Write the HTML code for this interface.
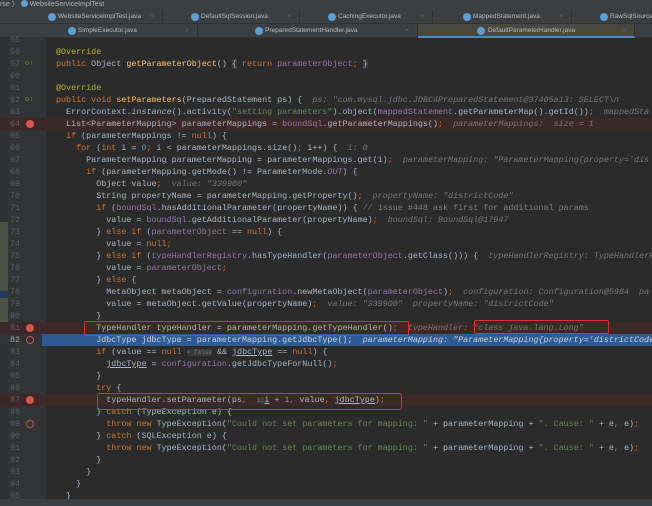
<!DOCTYPE html>
<html><head><meta charset="utf-8"><style>
*{margin:0;padding:0;box-sizing:border-box}
body{width:652px;height:506px;overflow:hidden;background:#2b2b2b;font-family:"Liberation Mono",monospace;position:relative}
.bc{position:absolute;left:0;top:0;width:652px;height:10px;background:#3c3f41;font:7px "Liberation Sans",sans-serif;color:#a9b7c6;line-height:10px;white-space:pre}
.tr{position:absolute;left:0;width:652px;height:14px;background:#3c3f41;border-bottom:1px solid #323232}
.tab{position:absolute;top:0;height:14px;border-right:1px solid #2f2f2f;font:6.5px "Liberation Sans",sans-serif;color:#bbbbbb;line-height:14px;white-space:pre}
.tab i{position:absolute;top:3px;width:8px;height:8px;border-radius:50%;background:#5c9fd1}
.tab b{position:absolute;right:8px;top:0;color:#666;font-weight:normal}
.gut{position:absolute;left:8px;top:38px;width:38px;height:462px;background:#313335}
.left{position:absolute;left:0;top:38px;width:8px;height:462px;background:#2f3133}
.ln{position:absolute;left:0;height:12px;width:652px;font-size:8.4px;line-height:12px;white-space:pre;color:#a9b7c6}
.ln .n{position:absolute;left:0;width:20px;text-align:right;color:#606366}
.ln .c{position:absolute;left:56px}
.red{background:#3d2828}
.blue{background:#2f5a92}
.k{color:#cc7832}.a{color:#bbb529}.m{color:#ffc66d}.f{color:#9876aa}.s{color:#6a8759}.d{color:#6897bb}.h{color:#787878;font-style:italic}.cm{color:#808080}.u{text-decoration:underline}
.bp{position:absolute;left:26px;top:2px;width:8px;height:8px;border-radius:50%;background:#d9534f}
.bo{position:absolute;left:26px;top:2px;width:8px;height:8px;border-radius:50%;border:1.2px solid #c75450}
.og{position:absolute;left:25px;color:#6a9955;font-size:7px}
.box{position:absolute;border:1.5px solid #e0302c;border-radius:2px}
.bot{position:absolute;left:0;top:499px;width:652px;height:7px;background:#3c3f41}
.g{position:absolute;top:0;width:1px;background:#373737}
</style></head><body>
<div class="bc">rse 〉 <span style="display:inline-block;width:7px;height:7px;border-radius:50%;background:#5c9fd1;vertical-align:-1px"></span> WebsiteServiceImplTest</div>
<div class="tr" style="top:10px">
<div class="tab" style="left:10px;width:153px"><i style="left:38px"></i><span style="position:absolute;left:48px">WebsiteServiceImplTest.java</span><b>×</b></div>
<div class="tab" style="left:163px;width:137px"><i style="left:28px"></i><span style="position:absolute;left:38px">DefaultSqlSession.java</span><b>×</b></div>
<div class="tab" style="left:300px;width:133px"><i style="left:28px"></i><span style="position:absolute;left:38px">CachingExecutor.java</span><b>×</b></div>
<div class="tab" style="left:433px;width:139px"><i style="left:30px"></i><span style="position:absolute;left:40px">MappedStatement.java</span><b>×</b></div>
<div class="tab" style="left:572px;width:80px"><i style="left:28px"></i><span style="position:absolute;left:38px">RawSqlSource</span></div>
</div>
<div class="tr" style="top:24px">
<div class="tab" style="left:10px;width:188px"><i style="left:58px"></i><span style="position:absolute;left:68px">SimpleExecutor.java</span><b>×</b></div>
<div class="tab" style="left:198px;width:220px"><i style="left:57px"></i><span style="position:absolute;left:67px">PreparedStatementHandler.java</span><b>×</b></div>
<div class="tab" style="left:418px;width:217px;background:#4a4940;border-bottom:2px solid #4a88c7"><i style="left:59px"></i><span style="position:absolute;left:70px">DefaultParameterHandler.java</span><b>×</b></div>
</div>
<div class="left"></div>
<div style="position:absolute;left:0;top:222px;width:8px;height:110px;background:#4b5347"></div>
<div style="position:absolute;left:0;top:291px;width:8px;height:7px;background:#1f3c5a"></div>
<div class="gut"></div>
<div class="g" style="left:44px;top:38px;height:462px"></div>

<div class="ln" style="top:34px"><span class="n">55</span></div>
<div class="ln" style="top:46px"><span class="n">56</span><span class="c a">@Override</span></div>
<div class="ln" style="top:58px"><span class="n">57</span><span class="og">o↑</span><span class="c"><span class="k">public</span> Object <span class="m">getParameterObject</span>() <span style="background:#3b3b3b">{</span> <span class="k">return</span> <span class="f">parameterObject</span><span class="k">;</span> <span style="background:#3b3b3b">}</span></span></div>
<div class="ln" style="top:70px"><span class="n">60</span></div>
<div class="ln" style="top:82px"><span class="n">61</span><span class="c a">@Override</span></div>
<div class="ln" style="top:94px"><span class="n">62</span><span class="og">o↑</span><span class="c"><span class="k">public void</span> <span class="m">setParameters</span>(PreparedStatement ps) {  <span class="h">ps: "com.mysql.jdbc.JDBC4PreparedStatement@37405a13: SELECT\n</span></span></div>
<div class="ln" style="top:106px"><span class="n">63</span><span class="c">  ErrorContext.<i>instance</i>().activity(<span class="s">"setting parameters"</span>).object(<span class="f">mappedStatement</span>.getParameterMap().getId())<span class="k">;</span>  <span class="h">mappedSta</span></span></div>
<div class="ln red" style="top:118px"><span class="n">64</span><span class="bp"></span><span class="c">  List&lt;ParameterMapping&gt; parameterMappings = <span class="f">boundSql</span>.getParameterMappings()<span class="k">;</span>  <span class="h">parameterMappings:  size = 1</span></span></div>
<div class="ln" style="top:130px"><span class="n">65</span><span class="c">  <span class="k">if</span> (parameterMappings != <span class="k">null</span>) {</span></div>
<div class="ln" style="top:142px"><span class="n">66</span><span class="c">    <span class="k">for</span> (<span class="k">int</span> i = <span class="d">0</span><span class="k">;</span> i &lt; parameterMappings.size()<span class="k">;</span> i++) {  <span class="h">i: 0</span></span></div>
<div class="ln" style="top:154px"><span class="n">67</span><span class="c">      ParameterMapping parameterMapping = parameterMappings.get(i)<span class="k">;</span>  <span class="h">parameterMapping: "ParameterMapping{property='dis</span></span></div>
<div class="ln" style="top:166px"><span class="n">68</span><span class="c">      <span class="k">if</span> (parameterMapping.getMode() != ParameterMode.<i class="f">OUT</i>) {</span></div>
<div class="ln" style="top:178px"><span class="n">69</span><span class="c">        Object value<span class="k">;</span>  <span class="h">value: "339900"</span></span></div>
<div class="ln" style="top:190px"><span class="n">70</span><span class="c">        String propertyName = parameterMapping.getProperty()<span class="k">;</span>  <span class="h">propertyName: "districtCode"</span></span></div>
<div class="ln" style="top:202px"><span class="n">71</span><span class="c">        <span class="k">if</span> (<span class="f">boundSql</span>.hasAdditionalParameter(propertyName)) { <span class="cm">// issue #448 ask first for additional params</span></span></div>
<div class="ln" style="top:214px"><span class="n">72</span><span class="c">          value = <span class="f">boundSql</span>.getAdditionalParameter(propertyName)<span class="k">;</span>  <span class="h">boundSql: BoundSql@17947</span></span></div>
<div class="ln" style="top:226px"><span class="n">73</span><span class="c">        } <span class="k">else if</span> (<span class="f">parameterObject</span> == <span class="k">null</span>) {</span></div>
<div class="ln" style="top:238px"><span class="n">74</span><span class="c">          value = <span class="k">null;</span></span></div>
<div class="ln" style="top:250px"><span class="n">75</span><span class="c">        } <span class="k">else if</span> (<span class="f">typeHandlerRegistry</span>.hasTypeHandler(<span class="f">parameterObject</span>.getClass())) {  <span class="h">typeHandlerRegistry: TypeHandlerR</span></span></div>
<div class="ln" style="top:262px"><span class="n">76</span><span class="c">          value = <span class="f">parameterObject</span><span class="k">;</span></span></div>
<div class="ln" style="top:274px"><span class="n">77</span><span class="c">        } <span class="k">else</span> {</span></div>
<div class="ln" style="top:286px"><span class="n">78</span><span class="c">          MetaObject metaObject = <span class="f">configuration</span>.newMetaObject(<span class="f">parameterObject</span>)<span class="k">;</span>  <span class="h">configuration: Configuration@5984  pa</span></span></div>
<div class="ln" style="top:298px"><span class="n">79</span><span class="c">          value = metaObject.getValue(propertyName)<span class="k">;</span>  <span class="h">value: "339900"  propertyName: "districtCode"</span></span></div>
<div class="ln" style="top:310px"><span class="n">80</span><span class="c">        }</span></div>
<div class="ln red" style="top:322px"><span class="n">81</span><span class="bp"></span><span class="c">        TypeHandler typeHandler = parameterMapping.getTypeHandler()<span class="k">;</span>  <span class="h">typeHandler: "class java.lang.Long"</span></span></div>
<div class="ln blue" style="top:334px"><span style="position:absolute;left:0;top:0;width:42px;height:12px;background:#313335"></span><span class="n" style="color:#a4a3a3">82</span><span class="bo"></span><span class="c" style="color:#c8d4e4">        JdbcType jdbcType = parameterMapping.getJdbcType();  <i>parameterMapping: "ParameterMapping{property='districtCode</i></span></div>
<div class="ln" style="top:346px"><span class="n">83</span><span class="c">        <span class="k">if</span> (value == <span class="k">null</span> <span style="background:#3a3a3a;color:#777;font-size:6px">= false</span> &amp;&amp; <span class="u">jdbcType</span> == <span class="k">null</span>) {</span></div>
<div class="ln" style="top:358px"><span class="n">84</span><span class="c">          <span class="u">jdbcType</span> = <span class="f">configuration</span>.getJdbcTypeForNull()<span class="k">;</span></span></div>
<div class="ln" style="top:370px"><span class="n">85</span><span class="c">        }</span></div>
<div class="ln" style="top:382px"><span class="n">86</span><span class="c">        <span class="k">try</span> {</span></div>
<div class="ln red" style="top:394px"><span class="n">87</span><span class="bp"></span><span class="c">          typeHandler.setParameter(ps<span class="k">,</span>  <span style="background:#3a3a3a;color:#777;font-size:6px">i:</span><span class="u">i</span> + <span class="d">1</span><span class="k">,</span> value<span class="k">,</span> <span class="u">jdbcType</span>)<span class="k">;</span></span></div>
<div class="ln" style="top:406px"><span class="n">88</span><span class="c">        } <span class="k">catch</span> (TypeException e) {</span></div>
<div class="ln" style="top:418px"><span class="n">89</span><span class="bo"></span><span class="c">          <span class="k">throw new</span> TypeException(<span class="s">"Could not set parameters for mapping: "</span> + parameterMapping + <span class="s">". Cause: "</span> + e<span class="k">,</span> e)<span class="k">;</span></span></div>
<div class="ln" style="top:430px"><span class="n">90</span><span class="c">        } <span class="k">catch</span> (SQLException e) {</span></div>
<div class="ln" style="top:442px"><span class="n">91</span><span class="c">          <span class="k">throw new</span> TypeException(<span class="s">"Could not set parameters for mapping: "</span> + parameterMapping + <span class="s">". Cause: "</span> + e<span class="k">,</span> e)<span class="k">;</span></span></div>
<div class="ln" style="top:454px"><span class="n">92</span><span class="c">        }</span></div>
<div class="ln" style="top:466px"><span class="n">93</span><span class="c">      }</span></div>
<div class="ln" style="top:478px"><span class="n">94</span><span class="c">    }</span></div>
<div class="ln" style="top:490px"><span class="n">95</span><span class="c">  }</span></div>

<div class="box" style="left:84px;top:321px;width:325px;height:15px"></div>
<div class="box" style="left:474px;top:320px;width:135px;height:14px"></div>
<div class="box" style="left:97px;top:393px;width:305px;height:17px"></div>
<div class="bot"></div>
</body></html>
